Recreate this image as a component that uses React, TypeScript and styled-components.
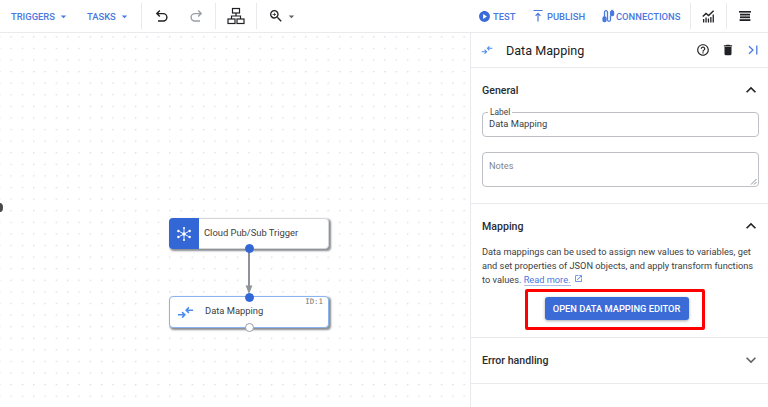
import React from "react";
import styled, { createGlobalStyle } from "styled-components";
import { MdPlayCircle, MdZoomIn, MdHelpOutline, MdDelete, MdExpandLess, MdExpandMore, MdOpenInNew, MdArrowDropDown } from "react-icons/md";

const Global = createGlobalStyle`
  html, body { margin: 0; padding: 0; background: #fff; }
  body { font-family: Roboto, "Liberation Sans", sans-serif; color: #202124; overflow: hidden; }
  * { box-sizing: border-box; }
`;

const Page = styled.div`width: 768px; height: 407px; display: flex; flex-direction: column; overflow: hidden;`;
const Toolbar = styled.header`height: 33px; flex: none; display: flex; align-items: center; border-bottom: 1px solid #e8eaed; background: #fff; padding-left: 11px;`;
const TextMenu = styled.button<{ $w: number }>`
  width: ${p => p.$w}px; flex: none; border: 0; background: none; padding: 0; display: flex; align-items: center;
  color: #4a78e0; font: 500 9.4px Roboto, sans-serif;
  svg { margin-left: 2px; color: #4a78e0; flex: none; }
`;
const Sep = styled.span`width: 1px; height: 26px; background: #e8eaed; flex: none;`;
const IconBtn = styled.button<{ $w: number; $c?: string }>`
  width: ${p => p.$w}px; flex: none; height: 26px; border: 0; background: none; padding: 0; display: flex; align-items: center; justify-content: center;
  color: ${p => p.$c ?? "#202124"};
  svg { flex: none; }
`;
const Gap = styled.span<{ $w: number }>`width: ${p => p.$w}px; flex: none;`;
const Spacer = styled.div`flex: 1;`;
const ActionBtn = styled.button<{ $w: number; $gap: number }>`
  width: ${p => p.$w}px; flex: none; border: 0; background: none; padding: 0; display: flex; align-items: center; gap: ${p => p.$gap}px;
  color: #4a78e0; font: 500 9.4px Roboto, sans-serif; white-space: nowrap;
`;
const Main = styled.div`flex: 1; display: flex; min-height: 0;`;
const Canvas = styled.section`
  width: 470px; flex: none; position: relative; overflow: hidden; background-color: #fff;
  background-image: radial-gradient(circle at 0.6px 0.6px, #dcdee1 0.7px, transparent 1px);
  background-size: 11.34px 11.6px; background-position: 10.4px 3.2px;
`;
const CursorBlob = styled.span`position: absolute; left: -3px; top: 170px; width: 6px; height: 9px; border-radius: 50%; background: #4a4a4a;`;
const Node = styled.div<{ $top: number; $selected?: boolean }>`
  position: absolute; left: 169px; top: ${p => p.$top}px; width: 160px; height: ${p => (p.$selected ? 32 : 31)}px;
  display: flex; align-items: center; background: #fff; border-radius: 4px;
  border: ${p => (p.$selected ? "1.5px solid #8ab4f0" : "1px solid #d4d6d9")};
  box-shadow: 1.5px 1.5px 2px #8a8d91;
`;
const NodeIcon = styled.div<{ $blue?: boolean }>`
  width: 30px; align-self: stretch; flex: none; display: flex; align-items: center; justify-content: center; margin: ${p => (p.$blue ? "-1px 0 -1px -1px" : "0 0 0 0")};
  background: ${p => (p.$blue ? "#3367d6" : "transparent")}; border-radius: 4px 0 0 4px;
`;
const NodeLabel = styled.span`font: 400 9.4px Roboto, sans-serif; color: #3c4043; margin: 0 0 3px 5px;`;
const NodeId = styled.span`position: absolute; right: 5px; top: 0; font: 7.4px "DejaVu Sans Mono", monospace; color: #70757a;`;
const Port = styled.span<{ $top: number; $open?: boolean }>`
  position: absolute; left: 245px; top: ${p => p.$top}px; width: 9px; height: 9px; border-radius: 50%;
  background: ${p => (p.$open ? "#fff" : "#3367d6")}; border: 1px solid ${p => (p.$open ? "#9aa0a6" : "#3367d6")}; z-index: 2;
`;
const Link = styled.svg`position: absolute; left: 240px; top: 212px; width: 20px; height: 52px;`;
const Panel = styled.aside`width: 298px; flex: none; border-left: 1px solid #e8eaed; display: flex; flex-direction: column; background: #fff; position: relative;`;
const PanelHead = styled.div`height: 35px; flex: none; display: flex; align-items: center; border-bottom: 1px solid #e8eaed; padding: 0 3px 0 10px;`;
const PanelTitle = styled.h1`margin: 0 0 0 13px; font: 400 12.6px Roboto, sans-serif; color: #202124; flex: 1;`;
const Section = styled.section<{ $h: number }>`height: ${p => p.$h}px; flex: none; border-bottom: 1px solid #e8eaed; padding: 0 9px 0 11px;`;
const SectionHead = styled.div`display: flex; align-items: center; justify-content: space-between; height: 44px; svg { margin-right: -2px; }`;
const SectionTitle = styled.h2`margin: 0; font: 500 10.6px Roboto, sans-serif; color: #2b2c2f;`;
const Field = styled.div<{ $h: number }>`
  position: relative; height: ${p => p.$h}px; border: 1px solid #bdc1c6; border-radius: 4px; padding: 5px 6px; font: 400 9.4px Roboto, sans-serif; color: #3c4043;
`;
const FieldLegend = styled.span`position: absolute; left: 5px; top: -6px; background: #fff; padding: 0 2px; font: 400 8.4px Roboto, sans-serif; color: #3c4043;`;
const NotesText = styled.span`color: #80868b; font-size: 9.2px; display: block; margin-top: 2px;`;
const Grip = styled.svg`position: absolute; right: 1px; bottom: 1px; width: 7px; height: 7px;`;
const FieldGap = styled.div`height: 15px;`;
const Para = styled.p`margin: -3px 0 0; font: 400 9.24px/14px Roboto, sans-serif; color: #3c4043; white-space: nowrap;`;
const ReadMore = styled.a`color: #4a78e0; border-bottom: 1px solid #a9c0ee; margin-right: 3px;`;
const BtnRow = styled.div`display: flex; justify-content: center; margin-top: 10px; padding-right: 8px;`;
const Primary = styled.button`
  width: 144px; height: 23px; border: 0; border-radius: 3px; background: #3b6bd6; color: #fff; font: 500 9.3px Roboto, sans-serif; padding: 0;
  box-shadow: 0 1px 3px rgba(60,64,67,.45);
`;
const Highlight = styled.div`position: absolute; left: 54px; top: 256px; width: 180px; height: 41px; border: 3px solid #f00; border-radius: 2px; pointer-events: none;`;

const Caret = () => <MdArrowDropDown size={13} />;

const UndoIcon = ({ flip, color }: { flip?: boolean; color: string }) => (
  <svg width="14" height="14" viewBox="0 0 14 14" fill="none" stroke={color} strokeWidth="1.4" style={flip ? { transform: "scaleX(-1)" } : undefined}>
    <path d="M4.8 1.6 1.8 4.6l3 3M2 4.6h6.2a3.5 3.5 0 0 1 0 7.4H3" />
  </svg>
);
const NodesIcon = () => (
  <svg width="18" height="18" viewBox="0 0 18 18" fill="none" stroke="#202124" strokeWidth="1.2">
    <rect x="5.5" y="1.5" width="7" height="4.5" /><rect x="1" y="12" width="7" height="4.5" /><rect x="10" y="12" width="7" height="4.5" />
    <path d="M9 6v3M4.5 12V9h9v3" />
  </svg>
);
const PublishIcon = () => (
  <svg width="14" height="14" viewBox="0 0 14 14" fill="none" stroke="#4a78e0" strokeWidth="1.2"><path d="M2.5 1.5h9M7 12.5V4.5M4.6 6.8 7 4.4l2.4 2.4" /></svg>
);
const ConnIcon = () => (
  <svg width="13" height="14" viewBox="0 0 13 14" fill="none" stroke="#4a78e0" strokeWidth="1.3">
    <rect x="1" y="8" width="3" height="4.5" rx="1.2" fill="#4a78e0" /><rect x="8.6" y="2" width="3" height="4.5" rx="1.2" fill="#4a78e0" />
    <path d="M2.5 8V3.2a1.5 1.5 0 0 1 3 0v7.6a1.5 1.5 0 0 0 3 0V6.5M10 2V.8" />
  </svg>
);
const ChartIcon = () => (
  <svg width="13" height="13" viewBox="0 0 13 13" fill="#202124">
    <path d="M1 9h1.3v3.5H1zM3.4 7.4h1.3v5.1H3.4zM5.8 8.6h1.3v3.9H5.8zM8.2 7h1.3v5.5H8.2zM10.6 4.6h1.3v7.9h-1.3z" />
    <path d="M.8 6.6 4 3.4l2.6 2.2L11.6.8" fill="none" stroke="#202124" strokeWidth="1.4" />
  </svg>
);
const TableIcon = () => (
  <svg width="12" height="10" viewBox="0 0 12 10" fill="#202124"><rect x="0" y="0" width="12" height="1.6" /><rect x="1" y="2.7" width="10" height="1.8" /><rect x="1" y="5.4" width="10" height="1.8" /><rect x="0.6" y="8.2" width="10.8" height="1.8" /></svg>
);
const MappingIcon = ({ size }: { size: number }) => (
  <svg width={size} height={size} viewBox="0 0 18 18" fill="none" stroke="#4a8bf0" strokeWidth="1.6">
    <path d="M1 11.5h7M5.4 8.6 8.3 11.5 5.4 14.4M17 6.5h-7M12.6 3.6 9.7 6.5l2.9 2.9" />
  </svg>
);
const CollapseIcon = () => (
  <svg width="12" height="12" viewBox="0 0 12 12" fill="none" stroke="#4a78e0" strokeWidth="1.3"><path d="M2 2.2 6 6l-4 3.8M9.8 1.5v9" /></svg>
);
const PubSubIcon = () => (
  <svg width="16" height="16" viewBox="0 0 16 16" fill="#fff" stroke="#fff">
    <g strokeWidth="0.9"><path d="M8 8 8 3M8 8 3.6 5.6M8 8l4.4-2.4M8 8v5M8 8l-4.4 2.4M8 8l4.4 2.4" /></g>
    <circle cx="8" cy="8" r="1.7" stroke="none" /><circle cx="8" cy="2" r="1.1" stroke="none" /><circle cx="8" cy="14" r="1.1" stroke="none" />
    <circle cx="2.4" cy="5" r="1.3" stroke="none" /><circle cx="13.6" cy="5" r="1.3" stroke="none" /><circle cx="2.4" cy="11" r="1.3" stroke="none" /><circle cx="13.6" cy="11" r="1.3" stroke="none" />
  </svg>
);

export default function App() {
  return (
    <Page>
      <Global />
      <Toolbar>
        <TextMenu $w={76}>TRIGGERS <Caret /></TextMenu>
        <TextMenu $w={54}>TASKS <Caret /></TextMenu>
        <Sep />
        <IconBtn $w={40}><UndoIcon color="#202124" /></IconBtn>
        <IconBtn $w={28} $c="#9aa0a6"><UndoIcon flip color="#9aa0a6" /></IconBtn>
        <Gap $w={5} />
        <Sep />
        <IconBtn $w={40}><NodesIcon /></IconBtn>
        <Sep />
        <Gap $w={9} />
        <IconBtn $w={20}><MdZoomIn size={16} /></IconBtn>
        <IconBtn $w={10} $c="#5f6368"><Caret /></IconBtn>
        <Spacer />
        <ActionBtn $w={53} $gap={2}><MdPlayCircle size={13} color="#3b6bd6" />TEST</ActionBtn>
        <ActionBtn $w={71} $gap={2}><PublishIcon />PUBLISH</ActionBtn>
        <ActionBtn $w={88} $gap={1}><ConnIcon />CONNECTIONS</ActionBtn>
        <Sep />
        <IconBtn $w={35}><ChartIcon /></IconBtn>
        <Sep />
        <IconBtn $w={36}><TableIcon /></IconBtn>
        <Gap $w={5} />
      </Toolbar>
      <Main>
        <Canvas>
          <CursorBlob />
          <Link viewBox="0 0 20 52">
            <path d="M9 4V42" stroke="#8f9296" strokeWidth="2" />
            <path d="M5.6 40.5h6.8L9 49z" fill="#8f9296" />
          </Link>
          <Node $top={185}>
            <NodeIcon $blue><PubSubIcon /></NodeIcon>
            <NodeLabel>Cloud Pub/Sub Trigger</NodeLabel>
          </Node>
          <Port $top={211} />
          <Node $top={263} $selected>
            <NodeIcon><MappingIcon size={17} /></NodeIcon>
            <NodeLabel>Data Mapping</NodeLabel>
            <NodeId>ID:1</NodeId>
          </Node>
          <Port $top={260} />
          <Port $top={290} $open />
        </Canvas>
        <Panel>
          <PanelHead>
            <MappingIcon size={12} />
            <PanelTitle>Data Mapping</PanelTitle>
            <IconBtn $w={25}><MdHelpOutline size={14} /></IconBtn>
            <IconBtn $w={25}><MdDelete size={14} /></IconBtn>
            <IconBtn $w={25}><CollapseIcon /></IconBtn>
          </PanelHead>
          <Section $h={136}>
            <SectionHead><SectionTitle>General</SectionTitle><MdExpandLess size={20} /></SectionHead>
            <Field $h={25}><FieldLegend>Label</FieldLegend>Data Mapping</Field>
            <FieldGap />
            <Field $h={35}>
              <NotesText>Notes</NotesText>
              <Grip viewBox="0 0 7 7"><path d="M1 6.5 6.5 1M4 6.5 6.5 4" stroke="#70757a" strokeWidth=".8" /></Grip>
            </Field>
          </Section>
          <Section $h={134}>
            <SectionHead><SectionTitle>Mapping</SectionTitle><MdExpandLess size={20} /></SectionHead>
            <Para>
              Data mappings can be used to assign new values to variables, get<br />
              and set properties of JSON objects, and apply transform functions<br />
              to values. <ReadMore>Read more.</ReadMore><MdOpenInNew size={9} color="#4a78e0" />
            </Para>
            <BtnRow><Primary>OPEN DATA MAPPING EDITOR</Primary></BtnRow>
          </Section>
          <Section $h={46}>
            <SectionHead><SectionTitle>Error handling</SectionTitle><MdExpandMore size={20} color="#5f6368" /></SectionHead>
          </Section>
          <Highlight />
        </Panel>
      </Main>
    </Page>
  );
}
